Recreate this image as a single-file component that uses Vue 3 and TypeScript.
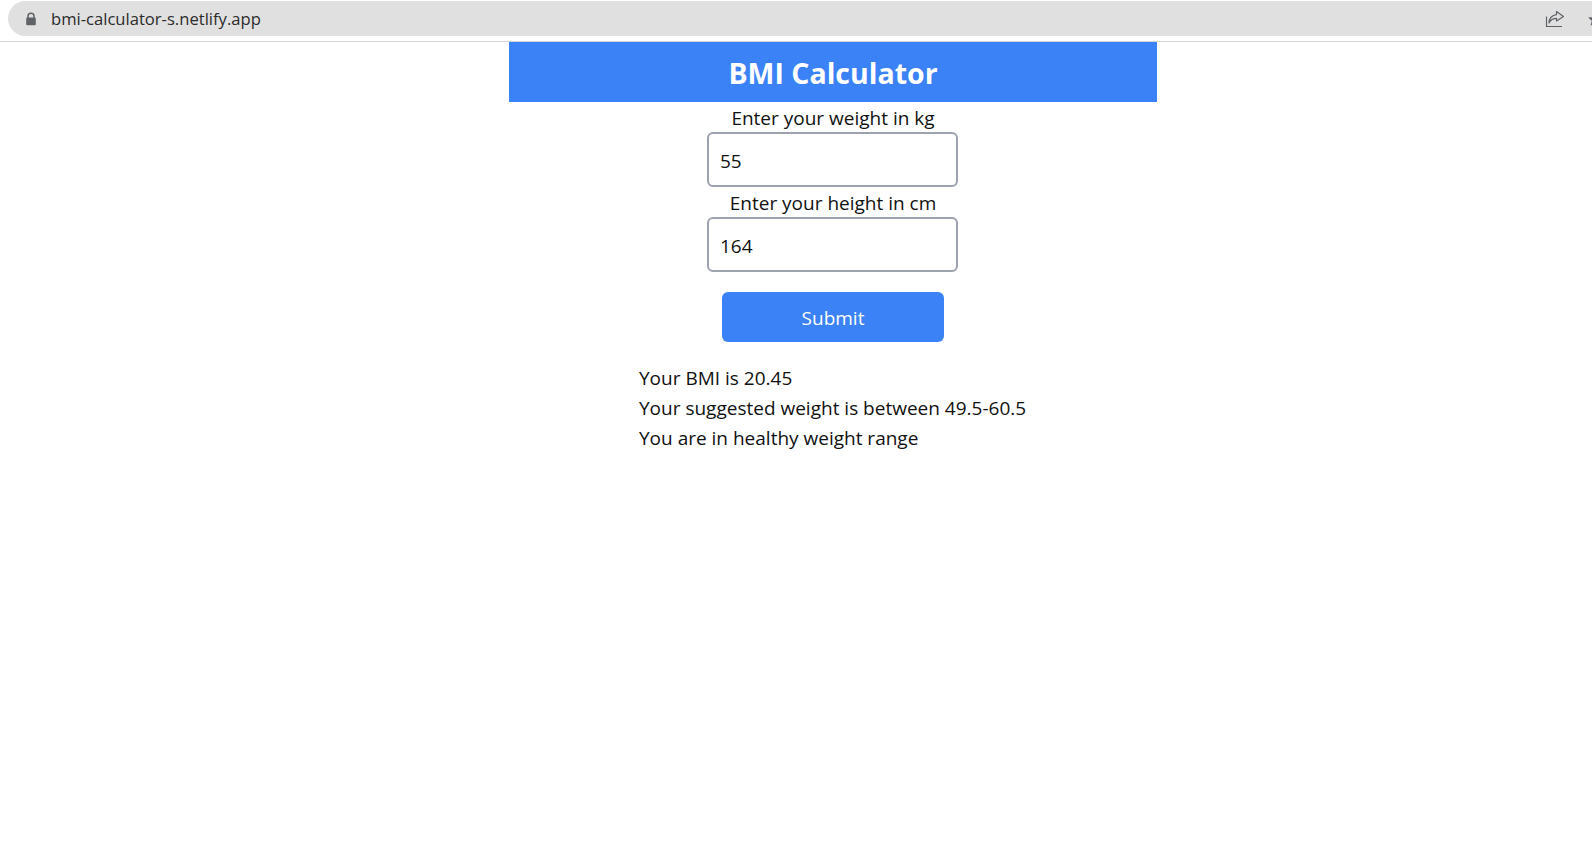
<script setup lang="ts">
import { ref } from 'vue'
const weight = ref('55')
const height = ref('164')
</script>

<template>
  <div class="page">
    <div class="chrome">
      <div class="omnibox">
        <svg class="lock" width="12" height="14" viewBox="0 0 12 14">
          <path d="M3 6V4.2C3 2.5 4.3 1.2 6 1.2S9 2.5 9 4.2V6" fill="none" stroke="#5f6368" stroke-width="1.5" />
          <rect x="1.2" y="5.6" width="9.6" height="7.6" rx="1.2" fill="#5f6368" />
        </svg>
        <span class="url">bmi-calculator-s.netlify.app</span>
        <svg class="share" width="20" height="18" viewBox="0 0 20 18">
          <path d="M1.5 6.5V16.5H17" fill="none" stroke="#5f6368" stroke-width="1.2" />
          <path d="M11.5 1.5L18.5 6.5L11.5 11V8.3C8 8.3 5.5 10 4 13C4 8.5 7 5 11.5 4.6Z" fill="none" stroke="#5f6368" stroke-width="1.2" stroke-linejoin="round" />
        </svg>
        <svg class="star" width="16" height="16" viewBox="0 0 16 16">
          <path d="M8 1.5L10 6.2L15 6.6L11.2 9.8L12.4 14.7L8 12.1L3.6 14.7L4.8 9.8L1 6.6L6 6.2Z" fill="#5f6368" />
        </svg>
      </div>
    </div>
    <main class="app">
      <h1 class="title">BMI Calculator</h1>
      <form class="form" @submit.prevent>
        <label class="label" for="w">Enter your weight in kg</label>
        <input id="w" v-model="weight" class="input" />
        <label class="label" for="h">Enter your height in cm</label>
        <input id="h" v-model="height" class="input" />
        <button class="submit" type="submit">Submit</button>
      </form>
      <div class="result">
        <p>Your BMI is 20.45</p>
        <p>Your suggested weight is between 49.5-60.5</p>
        <p>You are in healthy weight range</p>
      </div>
    </main>
  </div>
</template>

<style scoped>
.page {
  width: 1592px;
  height: 845px;
  overflow: hidden;
  background: #fff;
  font-family: "Open Sans", "Noto Sans", sans-serif;
  color: #111;
}
.chrome {
  box-sizing: content-box;
  height: 40px;
  padding: 1px 0 0 8px;
  border-bottom: 1px solid #d4d4d4;
}
.omnibox {
  height: 35px;
  background: #e0e0e0;
  border-radius: 18px 0 0 18px;
  display: flex;
  align-items: center;
  padding-left: 17px;
  overflow: hidden;
}
.lock { flex: none; }
.url {
  margin-left: 14px;
  font-size: 16.6px;
  color: #2b2b2b;
}
.share { margin-left: auto; flex: none; }
.star { flex: none; margin-left: 22px; margin-right: -11px; }
.app {
  width: 648px;
  margin: 0 0 0 509px;
  display: flex;
  flex-direction: column;
  align-items: center;
}
.title {
  width: 100%;
  height: 60px;
  margin: 0;
  background: #3b82f6;
  color: #fff;
  font-size: 28.5px;
  font-weight: 700;
  line-height: 62px;
  text-align: center;
}
.form {
  display: flex;
  flex-direction: column;
  align-items: center;
}
.label {
  box-sizing: border-box;
  height: 30px;
  padding-top: 1px;
  font-size: 19px;
  line-height: 30px;
}
.input {
  box-sizing: border-box;
  width: 251px;
  height: 55px;
  margin-right: 1px;
  padding: 2px 12px 0 11px;
  border: 2px solid #9ca3af;
  border-radius: 6px;
  font: inherit;
  font-size: 19px;
  color: #111;
  outline: none;
}
.submit {
  width: 222px;
  height: 50px;
  margin-top: 20px;
  padding: 2px 0 0;
  border: 0;
  border-radius: 6px;
  background: #3b82f6;
  color: #fff;
  font: inherit;
  font-size: 19px;
}
.result {
  align-self: flex-start;
  margin: 21px 0 0 130px;
}
.result p {
  margin: 0;
  font-size: 19px;
  line-height: 30px;
}
</style>
